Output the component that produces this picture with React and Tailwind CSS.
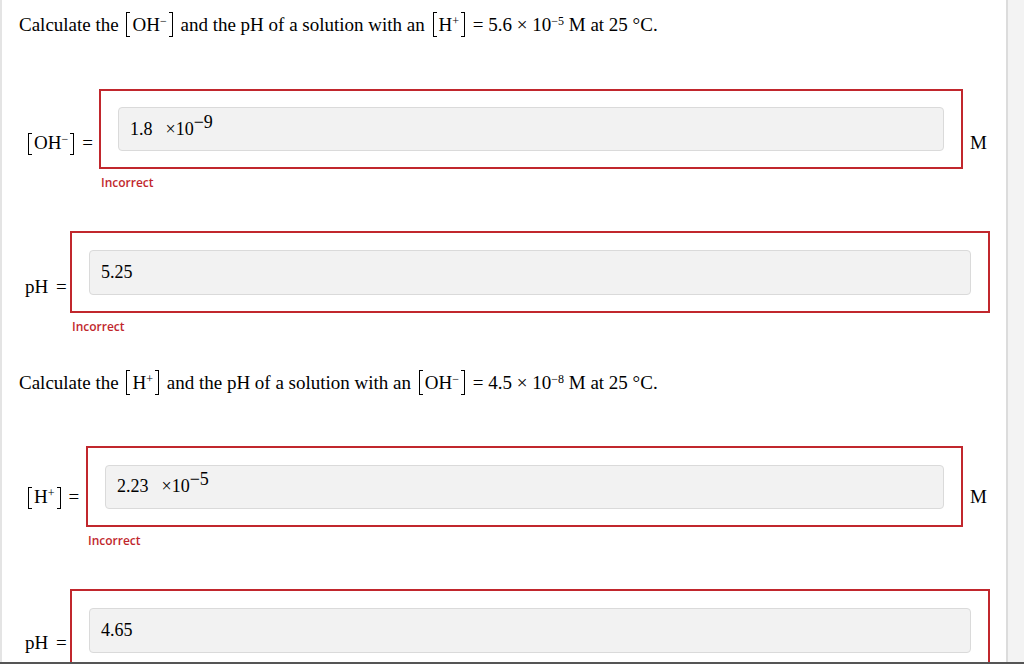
import React from "react";

const serif = { fontFamily: '"Liberation Serif", "Times New Roman", serif' };

// tall square bracket drawn with borders
const Bracket = ({ side, h }) => (
  <span
    className={`inline-block w-[4px] border-y border-black ${h} ${
      side === "l" ? "border-l mr-[2px]" : "border-r ml-[2px]"
    }`}
    style={{ verticalAlign: "-6px" }}
  />
);

const Ion = ({ base, charge, h = "h-[25px]" }) => (
  <span className="whitespace-nowrap mx-[3px]">
    <Bracket side="l" h={h} />
    {base}
    <sup className="text-[12px]">{charge}</sup>
    <Bracket side="r" h={h} />
  </span>
);

const Question = ({ children }) => (
  <div className="text-[19px] leading-[26px] text-black whitespace-nowrap" style={serif}>
    {children}
  </div>
);

const Incorrect = ({ left }) => (
  <div
    className={`mt-[6px] text-[12px] leading-[16px] font-semibold text-[#c1272d] ${left}`}
    style={{ fontFamily: '"Open Sans", sans-serif' }}
  >
    Incorrect
  </div>
);

const AnswerRow = ({ label, labelW, boxW, boxH, inputH, value, exp, unit, labelTop }) => (
  <div className="flex items-start ml-[6px]">
    <div className={`${labelW} ${labelTop} text-[19px] leading-[26px] whitespace-nowrap`} style={serif}>
      {label}
    </div>
    <div className={`${boxW} ${boxH} border-2 border-[#c1272d] px-[17px] flex items-center`}>
      <div
        className={`w-full ${inputH} bg-[#f2f2f2] border border-[#dadada] rounded-[4px] pl-[11px] flex items-center text-[18px]`}
        style={serif}
      >
        <span>{value}</span>
        {exp && (
          <span className="ml-[13px]">
            ×10<span className="relative -top-[7px]">{exp}</span>
          </span>
        )}
      </div>
    </div>
    {unit && (
      <div className={`ml-[7px] ${labelTop} text-[19px] leading-[26px]`} style={serif}>
        {unit}
      </div>
    )}
  </div>
);

export default function App() {
  return (
    <div className="w-[1024px] h-[664px] bg-[#f3f3f3] flex flex-col overflow-hidden">
      <div className="flex h-[662px]">
        <div className="w-[1006px] h-full bg-white border-l-2 border-[#e4e4e4] pl-[17px] pt-[12px] overflow-hidden">
          <Question>
            Calculate the <Ion base="OH" charge="−" /> and the pH of a solution with an{" "}
            <Ion base="H" charge="+" /> = 5.6 × 10<sup className="text-[12px]">−5</sup> M at 25 °C.
          </Question>

          <div className="mt-[51px]">
            <AnswerRow
              label={
                <span>
                  <Ion base="OH" charge="−" h="h-[22px]" />
                  <span className="ml-[5px]">=</span>
                </span>
              }
              labelW="w-[74px]"
              labelTop="mt-[41px]"
              boxW="w-[864px]"
              boxH="h-[80px]"
              inputH="h-[44px]"
              value="1.8"
              exp="−9"
              unit="M"
            />
          </div>
          <Incorrect left="ml-[82px]" />

          <div className="mt-[40px]">
            <AnswerRow
              label={<span className="[word-spacing:3px]">pH =</span>}
              labelW="w-[45px]"
              labelTop="mt-[43px]"
              boxW="w-[920px]"
              boxH="h-[82px]"
              inputH="h-[45px]"
              value="5.25"
            />
          </div>
          <Incorrect left="ml-[53px]" />

          <div className="mt-[35px]">
            <Question>
              Calculate the <Ion base="H" charge="+" /> and the pH of a solution with an{" "}
              <Ion base="OH" charge="−" /> = 4.5 × 10<sup className="text-[12px]">−8</sup> M at 25 °C.
            </Question>
          </div>

          <div className="mt-[50px]">
            <AnswerRow
              label={
                <span>
                  <Ion base="H" charge="+" h="h-[22px]" />
                  <span className="ml-[5px]">=</span>
                </span>
              }
              labelW="w-[61px]"
              labelTop="mt-[38px]"
              boxW="w-[877px]"
              boxH="h-[81px]"
              inputH="h-[44px]"
              value="2.23"
              exp="−5"
              unit="M"
            />
          </div>
          <Incorrect left="ml-[69px]" />

          <div className="mt-[40px]">
            <AnswerRow
              label={<span className="[word-spacing:3px]">pH =</span>}
              labelW="w-[45px]"
              labelTop="mt-[41px]"
              boxW="w-[920px]"
              boxH="h-[82px]"
              inputH="h-[45px]"
              value="4.65"
            />
          </div>
        </div>
        <div className="w-[2px] h-full bg-[#dcdcdc]" />
        <div className="flex-1 h-full bg-[#f3f3f3]" />
      </div>
      <div className="h-[2px] bg-[#555555]" />
    </div>
  );
}
